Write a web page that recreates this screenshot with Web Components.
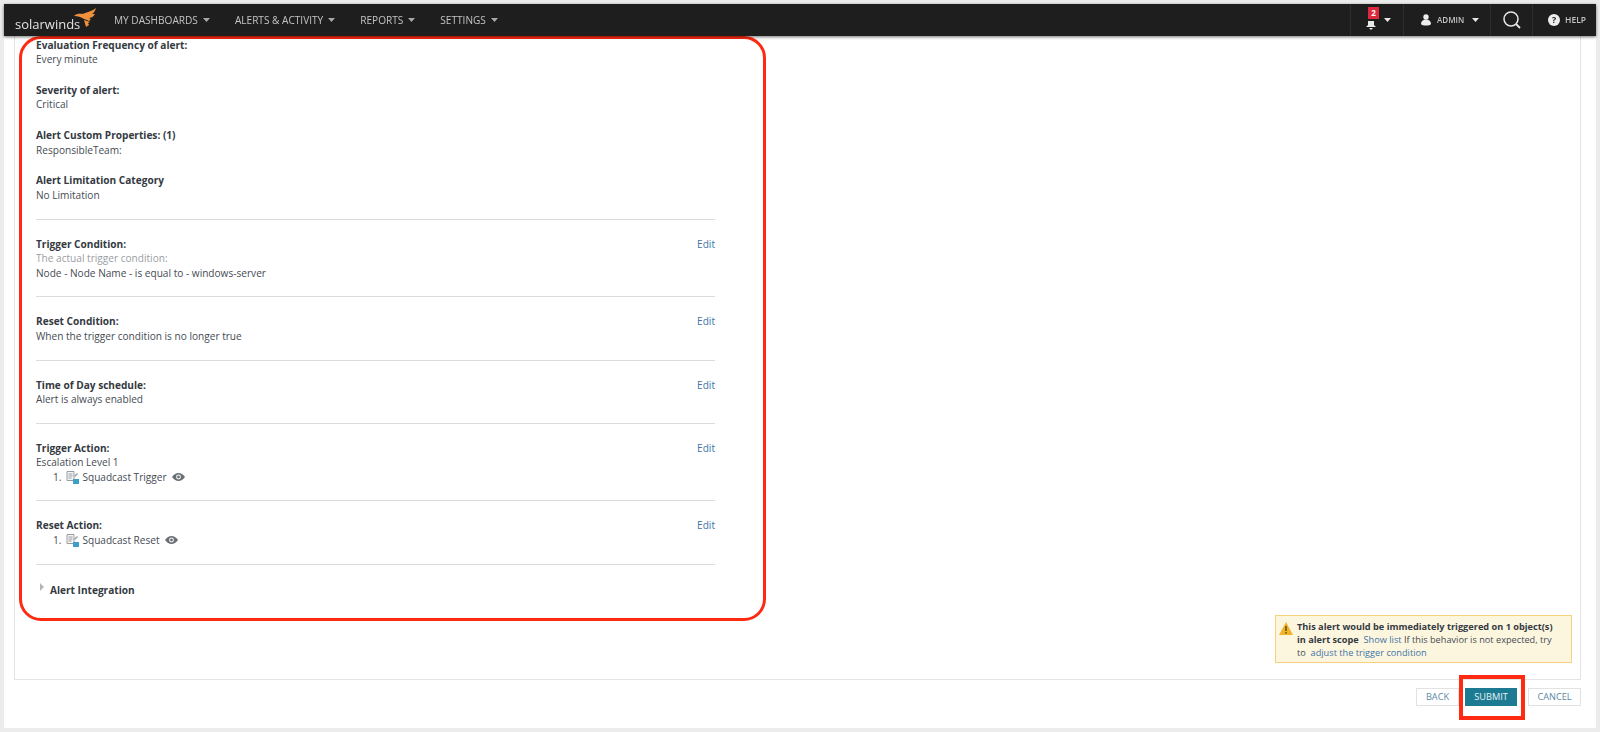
<!DOCTYPE html>
<html lang="en"><head><meta charset="utf-8"><title>Alert summary</title>
<style>
html,body{margin:0;height:100%;overflow:hidden;background:#ececec}
body{font:10.1px/14.5px "Open Sans",sans-serif;color:#454b54}
</style></head><body>
<sw-app>
  <sw-header slot="header"></sw-header>
  <sw-section title="Evaluation Frequency of alert:" plain>Every minute</sw-section>
  <sw-section title="Severity of alert:" plain>Critical</sw-section>
  <sw-section title="Alert Custom Properties: (1)" plain>ResponsibleTeam:</sw-section>
  <sw-section title="Alert Limitation Category" plain>No Limitation</sw-section>
  <sw-section title="Trigger Condition:" edit rule><span style="color:#9a9ea3">The actual trigger condition:</span><br>Node - Node Name - is equal to - windows-server</sw-section>
  <sw-section title="Reset Condition:" edit rule>When the trigger condition is no longer true</sw-section>
  <sw-section title="Time of Day schedule:" edit rule>Alert is always enabled</sw-section>
  <sw-section title="Trigger Action:" edit rule>Escalation Level 1<br><sw-action name="Squadcast Trigger"></sw-action></sw-section>
  <sw-section title="Reset Action:" edit rule><sw-action name="Squadcast Reset"></sw-action></sw-section>
  <sw-expander>Alert Integration</sw-expander>
  <sw-warning slot="warning"></sw-warning>
  <sw-button slot="footer" w="43">BACK</sw-button>
  <sw-button slot="footer" w="52" primary>SUBMIT</sw-button>
  <sw-button slot="footer" w="53">CANCEL</sw-button>
</sw-app>
<script>
const caret=c=>`<svg width="7" height="4" viewBox="0 0 7 4" style="flex:none"><path d="M0 0h7L3.500 4z" fill="${c||'#a8a8a8'}"/></svg>`;
function def(name,html){customElements.define(name,class extends HTMLElement{
  constructor(){super();this.attachShadow({mode:'open'});}
  connectedCallback(){this.shadowRoot.innerHTML=typeof html==='function'?html(this):html;}
});}
def('sw-app',`<style>
:host{display:block;position:relative;width:1592px;height:724px;margin:4px;background:#fff;filter:blur(.3px)}
.stack{display:flex;flex-direction:column;height:100%}
.panel{box-sizing:border-box;height:644px;margin:0 15px 0 10px;border:1px solid #e4e4e4;border-top:0;padding:1.500px 0 0 21px;position:relative;display:flex;flex-direction:column}
.rows{width:679px}
.warn{margin-top:auto;margin-bottom:16px;align-self:flex-end;margin-right:8px}
.foot{display:flex;justify-content:flex-end;gap:6px;padding:8px 15px 0 0}
.mark{position:absolute;box-sizing:border-box;border:3px solid #ff2a12;pointer-events:none}
.m1{left:15px;top:32px;width:747px;height:585px;border-radius:22px}
.m2{left:1455px;top:671px;width:66px;height:45px;border-width:4px}
</style><div class="stack">
<slot name="header"></slot>
<div class="panel"><div class="rows"><slot></slot></div><div class="warn"><slot name="warning"></slot></div></div>
<div class="foot"><slot name="footer"></slot></div></div>
<div class="mark m1"></div><div class="mark m2"></div>`);
def('sw-header',`<style>
:host{display:flex;align-items:center;height:32px;background:#1e1e1e;color:#c4c4c4;box-shadow:0 1px 3px rgba(0,0,0,.55);position:relative;z-index:1;font:500 10.1px/14px "Open Sans",sans-serif}
.logo{display:flex;align-items:flex-end;width:110px;padding-left:11px;box-sizing:border-box;height:100%;position:relative;flex:none}
.logo b{font:500 13px/1 "Open Sans",sans-serif;color:#e2e2e2;margin-bottom:5px}
.logo svg{position:absolute;left:70px;top:4px}
nav{display:flex;gap:25px;flex:1}
nav span{display:flex;align-items:center;gap:5px;white-space:nowrap}
.tools{display:flex;height:100%}
.t{display:flex;align-items:center;box-sizing:border-box;height:100%;border-left:1px solid #2e2e2e;font-size:8px;font-weight:600;position:relative}
.badge{position:absolute;left:17px;top:3px;width:11px;height:12px;background:#e0283c;color:#fff;font:700 8px/12px "Open Sans",sans-serif;text-align:center}
</style>
<div class="logo"><b>solarwinds</b><svg width="22" height="20" viewBox="0 0 22 20"><path d="M0 8C4 4 8 7 11 5 14 4 18 3 22 0 21 3 20 5 18 6L21 6C19 9 17 10 15 10 17 11 17 12 15 13L13 12 10 11C7 9 4 8 0 8z" fill="#f0923b"/><path d="M10 12l6 2-2 1 1 2-3 2z" fill="#f0923b"/></svg></div>
<nav><span>MY DASHBOARDS ${caret()}</span><span>ALERTS &amp; ACTIVITY ${caret()}</span><span>REPORTS ${caret()}</span><span>SETTINGS ${caret()}</span></nav>
<div class="tools">
<div class="t" style="width:53px;padding-left:15px"><svg width="10" height="9" viewBox="0 0 10 9" style="margin:11px 8px 0 0"><path d="M2 4V0h6v4l2 2H0zM3 7h4L5 9z" fill="#e8e8e8"/></svg>${caret('#e8e8e8')}<span class="badge">2</span></div>
<div class="t" style="width:87px;padding-left:17px"><svg width="10" height="12" viewBox="0 0 10 12" style="margin-right:6px"><circle cx="5" cy="3" r="2.700" fill="#eee"/><path d="M0 10c0-3 2-4.500 5-4.500S10 7 10 10c-1 2-9 2-10 0z" fill="#eee"/></svg><span>ADMIN</span>${caret('#e8e8e8').replace('flex:none','flex:none;margin-left:8px')}</div>
<div class="t" style="width:42px;padding-left:11px"><svg width="20" height="20" viewBox="0 0 20 20"><circle cx="9" cy="9" r="7" fill="none" stroke="#e8e8e8" stroke-width="1.500"/><path d="M14 14l4 4" stroke="#e8e8e8" stroke-width="1.800"/></svg></div>
<div class="t" style="width:64px;padding-left:15px;font-size:8.500px"><svg width="12" height="12" viewBox="0 0 13 13" style="margin-right:5px"><circle cx="6.500" cy="6.500" r="6.500" fill="#eee"/><text x="6.500" y="10" font-size="9.500" font-weight="700" text-anchor="middle" font-family="Open Sans" fill="#1e1e1e">?</text></svg><span>HELP</span></div>
</div>`);
def('sw-section',h=>`<style>
:host{display:block;padding:0 0 16.300px;position:relative}
:host([rule]){border-top:1px solid #dcdcdc;padding:17px 0 16.200px}
h4{margin:0;font:700 10.1px/14.500px "Open Sans",sans-serif;color:#343a42}
a{position:absolute;right:0;top:17px;color:#3d74a6}
</style><h4>${h.getAttribute('title')}</h4>${h.hasAttribute('edit')?'<a>Edit</a>':''}<slot></slot>`);
def('sw-action',h=>`<style>
:host{display:flex;align-items:center;padding-left:17px;height:14.500px;white-space:nowrap}
svg{margin:0 3px 0 5px}
.eye{margin:0 0 0 5px}
</style>1.<svg width="13" height="13" viewBox="0 0 13 13"><path d="M1 .5h7v9H1z" fill="#f4f4f4" stroke="#9a9ea3"/><path d="M2.500 3h4M2.500 5h4M2.500 7h3" stroke="#9a9ea3"/><path d="M8 5l3-3 1 1-3 3z" fill="#9a9ea3"/><rect x="7" y="8" width="6" height="5" fill="#3aa0c8"/></svg>${h.getAttribute('name')}<svg class="eye" width="13" height="8" viewBox="0 0 13 8"><path d="M0 4C2 1.200 4 0 6.500 0S11 1.200 13 4C11 6.800 9 8 6.500 8S2 6.800 0 4z" fill="#6a6f75"/><circle cx="6.500" cy="4" r="2.400" fill="#fff"/><circle cx="6.500" cy="4" r="1.400" fill="#6a6f75"/></svg>`);
def('sw-expander',`<style>
:host{display:flex;align-items:center;gap:6px;border-top:1px solid #dcdcdc;padding-top:18.500px;font-weight:700;color:#343a42}
svg{margin:-6px 0 0 4px}
</style><svg width="4" height="8" viewBox="0 0 4 8"><path d="M0 0l4 4-4 4z" fill="#b5b5b5"/></svg><slot></slot>`);
def('sw-warning',`<style>
:host{display:flex;box-sizing:border-box;width:297px;height:48px;background:#fdf6df;border:1px solid #f6d27c;padding:5px 6px 0 3px;gap:4px;font-size:9.200px;line-height:12.800px;color:#454b54}
.l{white-space:nowrap}
b{color:#343a42}a{color:#3d74a6}svg{flex:none;margin-top:1px}
</style><svg width="14" height="13" viewBox="0 0 14 13"><path d="M7 0l7 13H0z" fill="#f0b429"/><path d="M6.300 4h1.400v5H6.300zM6.300 10h1.400v1.500H6.300z" fill="#5a4510"/></svg>
<div><div class="l"><b>This alert would be immediately triggered on 1 object(s)</b></div><div class="l"><b>in alert scope</b> &nbsp;<a>Show list</a> If this behavior is not expected, try</div><div class="l">to &nbsp;<a>adjust the trigger condition</a></div></div>`);
def('sw-button',h=>{const p=h.hasAttribute('primary');return `<style>
:host{display:flex;align-items:center;justify-content:center;box-sizing:border-box;height:18px;width:${h.getAttribute('w')}px;border:1px solid ${p?'#1c7a93':'#e2e2e2'};background:${p?'#1c7a93':'#fff'};color:${p?'#e8f3f6':'#5b88a8'};font-size:9.200px;margin-right:${p?'5px':'0'}}
</style><slot></slot>`});
</script>
</body></html>
